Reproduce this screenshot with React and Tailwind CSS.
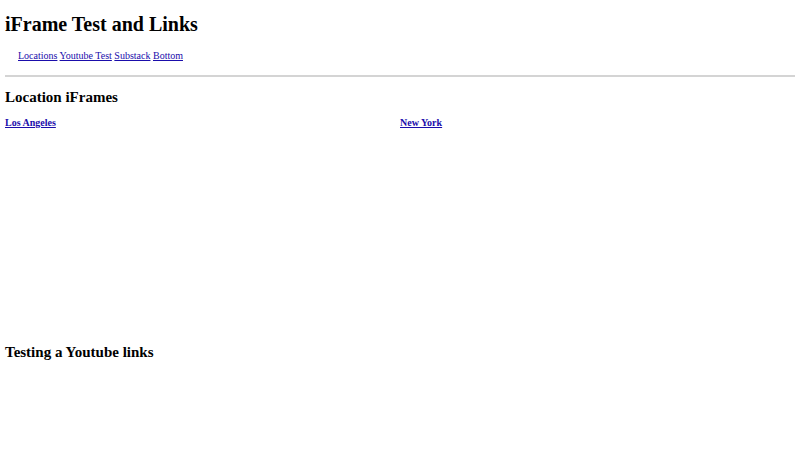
export default function App() {
  return (
    <div className="bg-white min-h-[450px] px-[5px] text-black">
      <div className="font-['Liberation_Serif',serif]">
        <h1 className="text-[20px] font-bold pt-[12px] leading-[24px]">iFrame Test and Links</h1>
        <nav className="pl-[13px] mt-[14px] text-[10px] leading-[12px]">
          <a href="#locations" className="text-[#1a0dab] underline">Locations</a>{" "}
          <a href="#youtube" className="text-[#1a0dab] underline">Youtube Test</a>{" "}
          <a href="#substack" className="text-[#1a0dab] underline">Substack</a>{" "}
          <a href="#bottom" className="text-[#1a0dab] underline">Bottom</a>
        </nav>
        <hr className="mt-[13px] border-t-2 border-[#d4d4d4]" />
        <h2 className="text-[15px] font-bold mt-[10px] leading-[20px]">Location iFrames</h2>
        <div className="grid grid-cols-2 mt-[2px]">
          <div className="h-[233px]">
            <a href="#la" className="text-[#1a0dab] underline font-bold text-[10px] leading-[12px]">Los Angeles</a>
          </div>
          <div className="h-[233px]">
            <a href="#ny" className="text-[#1a0dab] underline font-bold text-[10px] leading-[12px]">New York</a>
          </div>
        </div>
        <h2 className="text-[15px] font-bold leading-[20px]">Testing a Youtube links</h2>
      </div>
    </div>
  );
}
